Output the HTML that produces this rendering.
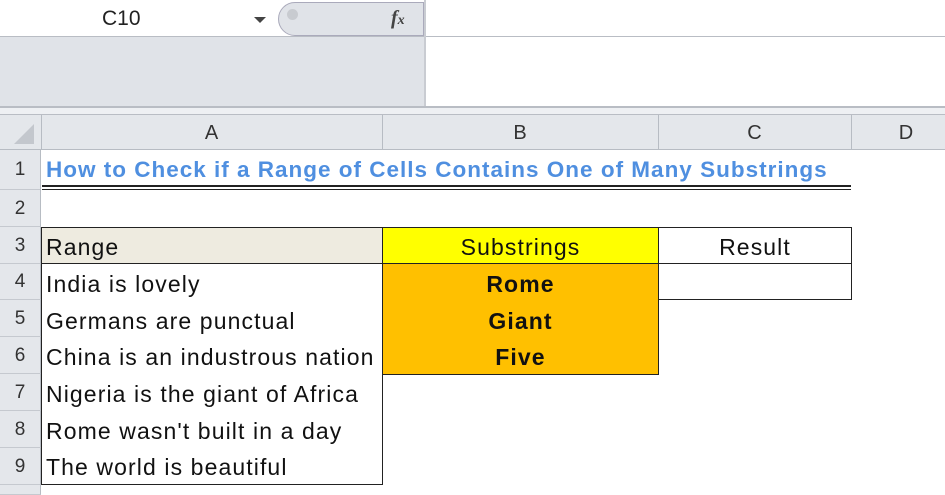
<!DOCTYPE html>
<html><head><style>
body{margin:0;width:945px;height:490px;overflow:hidden;background:#fff;font-family:"Liberation Sans",sans-serif;position:relative}
div{position:absolute;box-sizing:border-box}
.rh{left:0;width:41px;background:#e4e7eb;border-bottom:1px solid #c5c9cf;border-right:1px solid #b7bcc3;color:#333;font-size:19px;text-align:center}
.t{font-size:23px;letter-spacing:1.1px;color:#111;white-space:nowrap;line-height:36px}
</style></head><body>
<div style="left:0;top:0;width:945px;height:37px;background:#fff;border-bottom:1px solid #b9bdc4"></div>
<div style="left:0;top:37px;width:424px;height:70px;background:#e0e3e8"></div>
<div style="left:424px;top:0;width:2px;height:108px;background:#c9ccd2"></div>
<div style="left:102px;top:7px;font-size:21px;color:#222">C10</div>
<div style="left:254px;top:17px;width:0;height:0;border-left:6px solid transparent;border-right:6px solid transparent;border-top:6px solid #444"></div>
<div style="left:278px;top:2px;width:146px;height:34px;background:#e0e3e8;border-radius:17px 0 0 17px;border:1px solid #aab"></div>
<div style="left:287px;top:9px;width:11px;height:11px;border-radius:50%;background:#c8cbd0"></div>
<div style="left:391px;top:7px;font-family:'Liberation Serif',serif;font-style:italic;font-weight:bold;font-size:20px;color:#444">f<span style="font-size:14px">x</span></div>
<div style="left:0;top:106px;width:945px;height:9px;background:#eef0f3;border-top:2px solid #b9bdc4;border-bottom:1px solid #b9bdc4"></div>
<div style="left:0;top:115px;width:945px;height:35px;background:#e4e7eb;border-bottom:1px solid #b7bcc3"></div>
<div style="left:14px;top:124px;width:0;height:0;border-left:20px solid transparent;border-bottom:20px solid #c3c7cd"></div>
<div style="left:41px;top:115px;width:1px;height:35px;background:#b7bcc3"></div>
<div style="left:382px;top:115px;width:1px;height:35px;background:#b7bcc3"></div>
<div style="left:658px;top:115px;width:1px;height:35px;background:#b7bcc3"></div>
<div style="left:851px;top:115px;width:1px;height:35px;background:#b7bcc3"></div>
<div style="left:41px;top:122px;width:341px;text-align:center;font-size:20px;color:#333">A</div>
<div style="left:382px;top:122px;width:276px;text-align:center;font-size:20px;color:#333">B</div>
<div style="left:658px;top:122px;width:193px;text-align:center;font-size:20px;color:#333">C</div>
<div style="left:851px;top:122px;width:110px;text-align:center;font-size:20px;color:#333">D</div>
<div class="rh" style="top:150px;height:40px;line-height:40px">1</div>
<div class="rh" style="top:190px;height:37px;line-height:37px">2</div>
<div class="rh" style="top:227px;height:37px;line-height:37px">3</div>
<div class="rh" style="top:264px;height:36px;line-height:36px">4</div>
<div class="rh" style="top:300px;height:37px;line-height:37px">5</div>
<div class="rh" style="top:337px;height:37px;line-height:37px">6</div>
<div class="rh" style="top:374px;height:37px;line-height:37px">7</div>
<div class="rh" style="top:411px;height:37px;line-height:37px">8</div>
<div class="rh" style="top:448px;height:37px;line-height:37px">9</div>
<div class="rh" style="top:485px;height:10px"></div>
<div class="t" style="left:46px;top:152px;font-weight:bold;color:#4f8fe0;font-size:22.5px;letter-spacing:1px">How to Check if a Range of Cells Contains One of Many Substrings</div>
<div style="left:42px;top:185px;width:809px;height:5px;border-top:2px solid #222;border-bottom:1px solid #222"></div>
<div style="left:41px;top:227px;width:342px;height:37px;background:#eeebe0"></div>
<div style="left:382px;top:227px;width:277px;height:37px;background:#ffff00"></div>
<div style="left:382px;top:264px;width:277px;height:110px;background:#ffc000"></div>
<div style="left:41px;top:227px;width:342px;height:258px;border:1px solid #222"></div>
<div style="left:41px;top:263px;width:342px;height:1px;background:#222"></div>
<div style="left:382px;top:227px;width:277px;height:148px;border:1px solid #222"></div>
<div style="left:382px;top:263px;width:277px;height:1px;background:#222"></div>
<div style="left:658px;top:227px;width:194px;height:73px;border:1px solid #222"></div>
<div style="left:658px;top:263px;width:194px;height:1px;background:#222"></div>
<div class="t" style="left:46px;top:229px">Range</div>
<div class="t" style="left:382px;top:229px;width:277px;text-align:center">Substrings</div>
<div class="t" style="left:658px;top:229px;width:194px;text-align:center">Result</div>
<div class="t" style="left:46px;top:266px">India is lovely</div>
<div class="t" style="left:46px;top:303px">Germans are punctual</div>
<div class="t" style="left:46px;top:339px">China is an industrous nation</div>
<div class="t" style="left:46px;top:376px">Nigeria is the giant of Africa</div>
<div class="t" style="left:46px;top:413px">Rome wasn't built in a day</div>
<div class="t" style="left:46px;top:449px">The world is beautiful</div>
<div class="t" style="left:382px;top:266px;width:277px;text-align:center;font-weight:bold">Rome</div>
<div class="t" style="left:382px;top:303px;width:277px;text-align:center;font-weight:bold">Giant</div>
<div class="t" style="left:382px;top:339px;width:277px;text-align:center;font-weight:bold">Five</div>
</body></html>
